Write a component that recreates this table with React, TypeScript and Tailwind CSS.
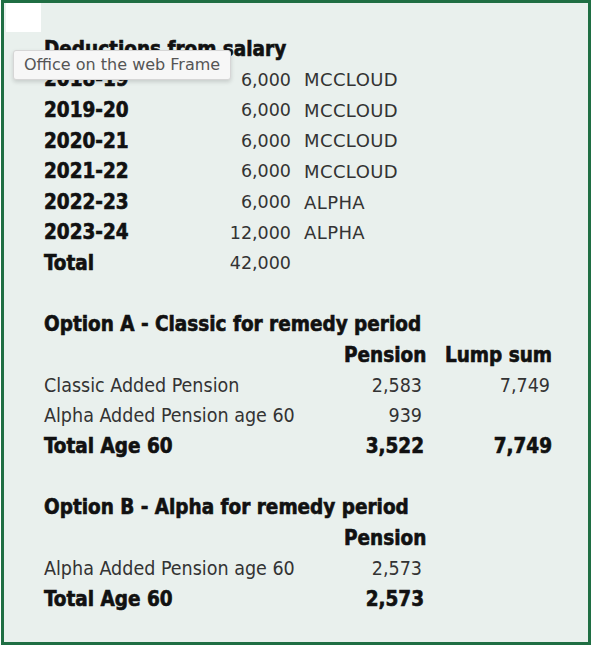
const narrow = 'font-["Liberation_Sans_Narrow","DejaVu_Sans_Condensed",sans-serif]';
const heavy = 'text-[20.5px] font-bold text-[#111] [-webkit-text-stroke:0.6px_#111]';

type Deduction = { year: string; amount: string; scheme: string };

const deductions: Deduction[] = [
  { year: '2018-19', amount: '6,000', scheme: 'MCCLOUD' },
  { year: '2019-20', amount: '6,000', scheme: 'MCCLOUD' },
  { year: '2020-21', amount: '6,000', scheme: 'MCCLOUD' },
  { year: '2021-22', amount: '6,000', scheme: 'MCCLOUD' },
  { year: '2022-23', amount: '6,000', scheme: 'ALPHA' },
  { year: '2023-24', amount: '12,000', scheme: 'ALPHA' },
  { year: 'Total', amount: '42,000', scheme: '' },
];

function Row({ children }: { children?: React.ReactNode }) {
  return <div className="flex h-[30.57px] items-center">{children}</div>;
}

function ValueRow({
  label,
  pension,
  lump,
  bold,
}: {
  label: string;
  pension: string;
  lump?: string;
  bold?: boolean;
}) {
  const style = bold ? heavy : 'text-[19.5px] text-[#333] pr-[2px]';
  return (
    <Row>
      <span className={`w-[300px] ${narrow} ${style}`}>{label}</span>
      <span className={`w-[80px] text-right ${narrow} ${style}`}>{pension}</span>
      <span className={`w-[128px] text-right ${narrow} ${style}`}>{lump}</span>
    </Row>
  );
}

export default function App() {
  return (
    <div className="h-[646px] w-[592px] bg-white px-[1px] pb-[1px]">
      <div className="relative h-full w-full border-[3px] border-[#1f6e43] bg-[#e9f0ed]">
        <div className="absolute left-[2px] top-0 h-[29px] w-[35px] bg-white" />

        <div className="pl-[40px] pt-[31px]">
          <Row>
            <span className={`${narrow} ${heavy}`}>Deductions from salary</span>
          </Row>
          {deductions.map((d) => (
            <Row key={d.year}>
              <span className={`w-[150px] ${narrow} ${heavy}`}>{d.year}</span>
              <span className="w-[97px] text-right font-['DejaVu_Sans',sans-serif] text-[17.5px] text-[#333]">
                {d.amount}
              </span>
              <span className="pl-[13px] font-['DejaVu_Sans',sans-serif] text-[18px] tracking-[0.4px] text-[#333]">
                {d.scheme}
              </span>
            </Row>
          ))}
          <Row />

          <Row>
            <span className={`${narrow} ${heavy}`}>Option A - Classic for remedy period</span>
          </Row>
          <ValueRow label="" pension="Pension" lump="Lump sum" bold />
          <ValueRow label="Classic Added Pension" pension="2,583" lump="7,749" />
          <ValueRow label="Alpha Added Pension age 60" pension="939" />
          <ValueRow label="Total Age 60" pension="3,522" lump="7,749" bold />
          <Row />

          <Row>
            <span className={`${narrow} ${heavy}`}>Option B - Alpha for remedy period</span>
          </Row>
          <ValueRow label="" pension="Pension" bold />
          <ValueRow label="Alpha Added Pension age 60" pension="2,573" />
          <ValueRow label="Total Age 60" pension="2,573" bold />
        </div>

        <div className="absolute left-[9px] top-[47px] rounded-[3px] border border-[#d6d6d6] bg-[#f7f7f7] px-[10px] py-[4px] font-['DejaVu_Sans',sans-serif] text-[16px] leading-[20px] text-[#555] shadow-[0_2px_4px_rgba(0,0,0,0.15)]">
          Office on the web Frame
        </div>
      </div>
    </div>
  );
}
